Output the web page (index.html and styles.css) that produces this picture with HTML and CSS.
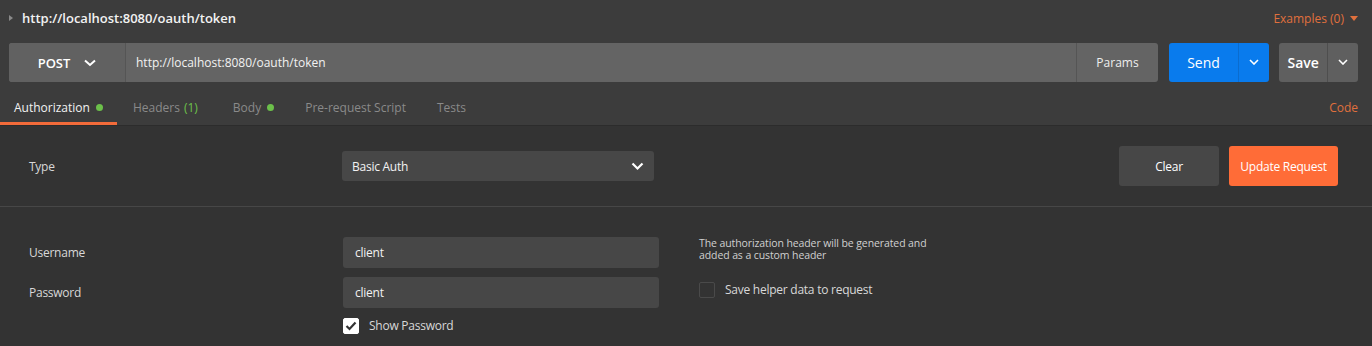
FILE: index.html
```html
<html>
<head>
    <title>http://localhost:8080/oauth/token</title>
    <link rel="stylesheet" href="styles.css">
</head>
<body>
    <div class="request-top">
        <div class="title-row">
            <div class="title">
                <span class="caret-right"></span>
                <span>http://localhost:8080/oauth/token</span>
            </div>
            <div class="examples">Examples (0) <span class="caret-down"></span></div>
        </div>

        <div class="url-row">
            <div class="url-bar">
                <div class="method">POST
                    <svg width="12" height="8" viewBox="0 0 12 8"><path d="M1 1.5 L6 6 L11 1.5" fill="none" stroke="#fff" stroke-width="2"/></svg>
                </div>
                <div class="url">http://localhost:8080/oauth/token</div>
                <div class="params">Params</div>
            </div>
            <div class="split-button send">
                <div class="split-main">Send</div>
                <div class="split-arrow">
                    <svg width="10" height="6" viewBox="0 0 10 6"><path d="M1 1 L5 5 L9 1" fill="none" stroke="#fff" stroke-width="1.6"/></svg>
                </div>
            </div>
            <div class="split-button save">
                <div class="split-main">Save</div>
                <div class="split-arrow">
                    <svg width="10" height="6" viewBox="0 0 10 6"><path d="M1 1 L5 5 L9 1" fill="none" stroke="#fff" stroke-width="1.6"/></svg>
                </div>
            </div>
        </div>

        <div class="tabs">
            <div class="tab active">Authorization <span class="dot"></span></div>
            <div class="tab tab-wide">Headers <span class="count">(1)</span></div>
            <div class="tab">Body <span class="dot"></span></div>
            <div class="tab">Pre-request Script</div>
            <div class="tab">Tests</div>
            <div class="tab-code">Code</div>
        </div>
    </div>

    <div class="auth">
        <div class="auth-type">
            <div class="label">Type</div>
            <div class="select">
                <span>Basic Auth</span>
                <svg width="13" height="9" viewBox="0 0 13 9"><path d="M1.5 1.5 L6.5 6.5 L11.5 1.5" fill="none" stroke="#fff" stroke-width="2.2"/></svg>
            </div>
            <div class="auth-actions">
                <button class="btn btn-grey">Clear</button>
                <button class="btn btn-orange">Update Request</button>
            </div>
        </div>

        <div class="auth-fields">
            <div class="fields">
                <div class="field-row">
                    <div class="label field-label">Username</div>
                    <div class="input">client</div>
                </div>
                <div class="field-row">
                    <div class="label field-label">Password</div>
                    <div class="input">client</div>
                </div>
                <div class="field-row">
                    <div class="label field-label"></div>
                    <div class="check-line">
                        <span class="checkbox checked">
                            <svg width="12" height="10" viewBox="0 0 12 10"><path d="M1.5 5 L4.5 8 L10.5 1.5" fill="none" stroke="#333" stroke-width="2.2"/></svg>
                        </span>
                        <span>Show Password</span>
                    </div>
                </div>
            </div>
            <div class="helper">
                <p class="helper-text">The authorization header will be generated and<br>added as a custom header</p>
                <div class="check-line">
                    <span class="checkbox"></span>
                    <span>Save helper data to request</span>
                </div>
            </div>
        </div>
    </div>
</body>
</html>
```

FILE: styles.css
```css
body {
    margin: 0;
    background-color: #333333;
    font-family: "Open Sans", sans-serif;
    color: #f0f0f0;
}
.request-top {
    background-color: #3c3c3c;
    border-bottom: 1px solid #2c2c2c;
}
.title-row {
    display: flex;
    justify-content: space-between;
    align-items: center;
    height: 36px;
    padding: 0 14px 0 9px;
}
.title {
    display: flex;
    align-items: center;
    font-size: 13px;
    font-weight: 600;
    color: #f2f2f2;
}
.caret-right {
    width: 0;
    height: 0;
    border-top: 3.5px solid transparent;
    border-bottom: 3.5px solid transparent;
    border-left: 4px solid #8a8a8a;
    margin-right: 9px;
}
.examples {
    font-size: 12px;
    color: #e0703d;
    display: flex;
    align-items: center;
}
.caret-down {
    width: 0;
    height: 0;
    border-left: 4px solid transparent;
    border-right: 4px solid transparent;
    border-top: 5px solid #e0703d;
    margin-left: 6px;
}
.url-row {
    display: flex;
    padding: 7px 14px 0 9px;
    height: 39px;
}
.url-bar {
    display: flex;
    width: 1150px;
    background-color: #646464;
    border-radius: 3px;
    font-size: 12px;
}
.method {
    width: 116px;
    display: flex;
    align-items: center;
    justify-content: center;
    gap: 14px;
    font-size: 13px;
    font-weight: 600;
    color: #fff;
    background-color: #616161;
    border-right: 1px solid #555;
    border-radius: 3px 0 0 3px;
}
.url {
    flex: 1;
    display: flex;
    align-items: center;
    padding-left: 10px;
    color: #f2f2f2;
}
.params {
    width: 81px;
    display: flex;
    align-items: center;
    justify-content: center;
    border-left: 1px solid #555;
    color: #eee;
}
.split-button {
    display: flex;
    border-radius: 3px;
    color: #fff;
}
.split-main {
    display: flex;
    align-items: center;
    justify-content: center;
    font-size: 14px;
}
.split-arrow {
    width: 30px;
    display: flex;
    align-items: center;
    justify-content: center;
    padding-bottom: 2px;
}
.send {
    width: 100px;
    margin-left: 11px;
    background-color: #097bed;
}
.send .split-main {
    width: 69px;
    border-right: 1px solid #0a6ccf;
}
.save {
    width: 79px;
    margin-left: 10px;
    background-color: #5f5f5f;
}
.save .split-main {
    width: 49px;
    font-weight: 600;
    border-right: 1px solid #4e4e4e;
}
.tabs {
    display: flex;
    align-items: stretch;
    height: 43px;
    font-size: 12px;
}
.tab {
    display: flex;
    align-items: center;
    padding: 10px 15px 0 14px;
    color: #8a8a8a;
    margin-right: 2px;
    border-bottom: 3px solid transparent;
    box-sizing: border-box;
}
.tab-wide {
    margin-right: 6px;
}
.tab.active {
    color: #f2f2f2;
    border-bottom-color: #f26b3a;
    padding-right: 14px;
    padding-left: 14px;
}
.dot {
    width: 7px;
    height: 7px;
    border-radius: 50%;
    background-color: #6cc04a;
    margin-left: 6px;
}
.count {
    color: #6cc04a;
    margin-left: 4px;
}
.tab-code {
    margin-left: auto;
    padding: 10px 14px 3px 0;
    display: flex;
    align-items: center;
    color: #e0703d;
}
.auth {
    font-size: 12px;
    letter-spacing: -0.25px;
    color: #d8d8d8;
}
.auth-type {
    display: flex;
    align-items: center;
    height: 80px;
    padding: 0 34px 0 29px;
    border-bottom: 1px solid #474747;
}
.label {
    width: 313px;
}
.field-label {
    width: 314px;
}
.select {
    width: 312px;
    height: 30px;
    box-sizing: border-box;
    display: flex;
    align-items: center;
    justify-content: space-between;
    padding: 0 10px 0 10px;
    background-color: #474747;
    border-radius: 3px;
    color: #f2f2f2;
}
.auth-actions {
    margin-left: auto;
    display: flex;
    gap: 10px;
}
.btn {
    height: 40px;
    border: none;
    border-radius: 3px;
    font-family: "Open Sans", sans-serif;
    font-size: 12px;
    letter-spacing: -0.25px;
    color: #fff;
}
.btn-grey {
    width: 100px;
    background-color: #474747;
}
.btn-orange {
    width: 109px;
    background-color: #ff6c37;
}
.auth-fields {
    display: flex;
    padding: 30px 0 0 29px;
}
.fields {
    width: 630px;
}
.field-row {
    display: flex;
    align-items: center;
    margin-bottom: 9px;
}
.input {
    width: 316px;
    height: 31px;
    box-sizing: border-box;
    display: flex;
    align-items: center;
    padding-left: 12px;
    background-color: #474747;
    border-radius: 3px;
    color: #f2f2f2;
}
.check-line {
    display: flex;
    align-items: center;
    gap: 10px;
}
.checkbox {
    width: 16px;
    height: 16px;
    box-sizing: border-box;
    border: 1px solid #4a4a4a;
    border-radius: 2px;
    display: flex;
    align-items: center;
    justify-content: center;
}
.checkbox.checked {
    background-color: #fff;
    border-color: #fff;
}
.helper {
    padding-left: 40px;
}
.helper-text {
    margin: 0 0 20px 0;
    font-size: 10.5px;
    line-height: 12px;
    letter-spacing: -0.1px;
    color: #d0d0d0;
}
```
